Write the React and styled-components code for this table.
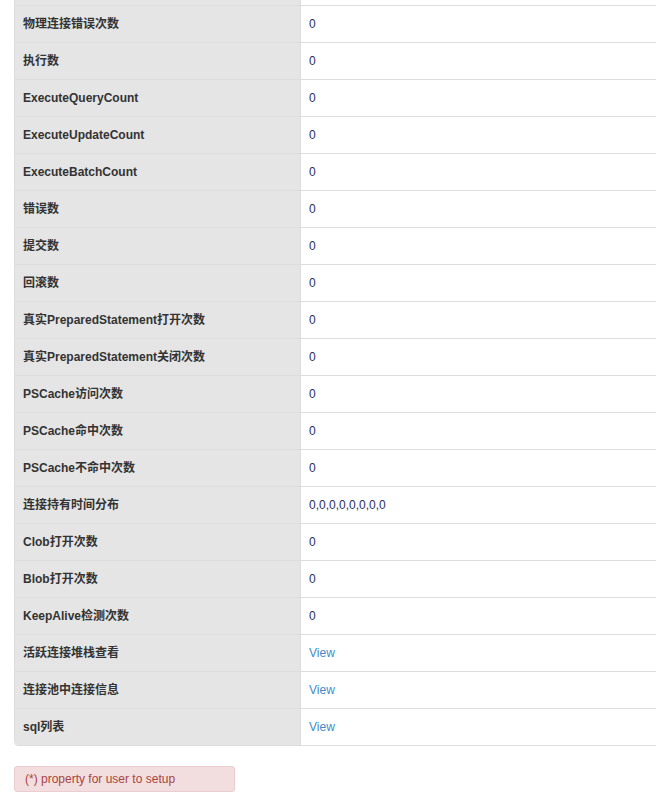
import React from 'react';
import styled, { createGlobalStyle } from 'styled-components';

const GlobalStyle = createGlobalStyle`
  html, body {
    margin: 0;
    padding: 0;
    background: #fff;
    overflow-x: hidden;
  }
  body {
    font-family: "Liberation Sans", Arial, "Noto Sans CJK SC", sans-serif;
    font-size: 12px;
    color: #333;
  }
`;

const Page = styled.div`
  padding: 0 0 10px 14px;
  overflow: hidden;
`;

const StatsTable = styled.table`
  width: 680px;
  margin-top: -32px; /* first row is scrolled mostly out of view */
  table-layout: fixed;
  border-collapse: separate;
  border-spacing: 0;
  border: 1px solid #ddd;
  border-radius: 4px;
`;

const LabelCol = styled.col`
  width: 286px;
`;

const Row = styled.tr`
  &:first-child td {
    border-top: none;
  }
`;

const Label = styled.td`
  height: 20px;
  padding: 8px;
  line-height: 20px;
  font-weight: bold;
  color: #333;
  background: #e5e5e5;
  border-top: 1px solid #ddd;
  border-right: 1px solid #ddd;
  vertical-align: top;
  white-space: nowrap;
`;

const Value = styled.td`
  padding: 8px;
  line-height: 20px;
  color: #2c2f5e;
  border-top: 1px solid #ddd;
  vertical-align: top;
`;

const ViewLink = styled.a`
  color: #428bca;
  text-decoration: none;
`;

const Alert = styled.div`
  width: 221px;
  box-sizing: border-box;
  margin-top: 20px;
  padding: 4px 10px 4px;
  line-height: 16px;
  background: #f2dede;
  border: 1px solid #ebccd1;
  border-radius: 3px;
  color: #a94442;
`;

const rows = [
  ['', ''],
  ['物理连接错误次数', '0'],
  ['执行数', '0'],
  ['ExecuteQueryCount', '0'],
  ['ExecuteUpdateCount', '0'],
  ['ExecuteBatchCount', '0'],
  ['错误数', '0'],
  ['提交数', '0'],
  ['回滚数', '0'],
  ['真实PreparedStatement打开次数', '0'],
  ['真实PreparedStatement关闭次数', '0'],
  ['PSCache访问次数', '0'],
  ['PSCache命中次数', '0'],
  ['PSCache不命中次数', '0'],
  ['连接持有时间分布', '0,0,0,0,0,0,0,0'],
  ['Clob打开次数', '0'],
  ['Blob打开次数', '0'],
  ['KeepAlive检测次数', '0'],
  ['活跃连接堆栈查看', null],
  ['连接池中连接信息', null],
  ['sql列表', null],
];

export default function App() {
  return (
    <>
      <GlobalStyle />
      <Page>
        <StatsTable>
          <colgroup>
            <LabelCol />
            <col />
          </colgroup>
          <tbody>
            {rows.map(([label, value], i) => (
              <Row key={i}>
                <Label>{label}</Label>
                <Value>
                  {value === null ? <ViewLink href="#">View</ViewLink> : value}
                </Value>
              </Row>
            ))}
          </tbody>
        </StatsTable>
        <Alert>(*) property for user to setup</Alert>
      </Page>
    </>
  );
}
